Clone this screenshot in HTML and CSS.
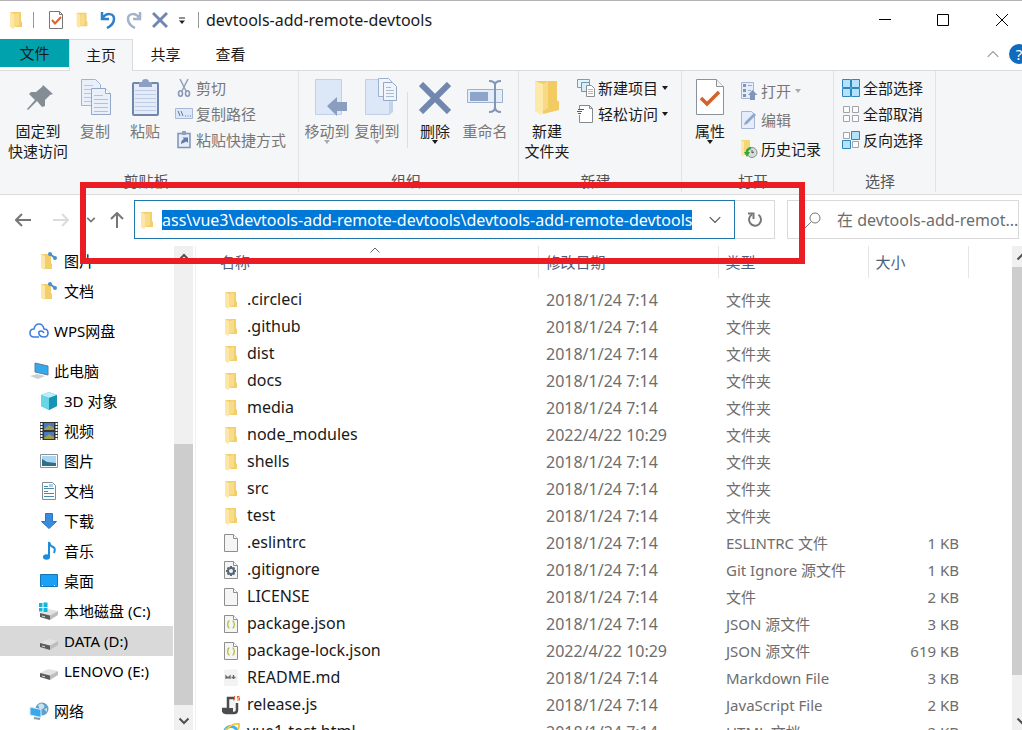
FILE: index.html
```html
<!DOCTYPE html>
<html lang="zh-CN">
<head>
  <meta charset="UTF-8" />
  <meta name="viewport" content="width=device-width, initial-scale=1.0" />
  <title>devtools-add-remote-devtools</title>
  <link rel="stylesheet" href="styles.css">
</head>
<body>
  <!-- shared icons -->
  <svg class="sprite" aria-hidden="true">
    <symbol id="i-folder" viewBox="0 0 16 20">
      <path d="M2 2h11v9l1 1v5H5z" fill="#f3cf6b"/>
      <path d="M2 2l4 2v14l-1 1-3-2z" fill="#fce7a6"/>
      <path d="M6 4l5-1v12l-5 2z" fill="#f9dc8b"/>
    </symbol>
    <symbol id="i-folder-sync" viewBox="0 0 18 20">
      <path d="M1 3h10v9l1 1v5H4z" fill="#f3cf6b"/>
      <path d="M1 3l4 2v14l-4-2z" fill="#fce7a6"/>
      <path d="M10 3l5 4" stroke="#4a90cf" stroke-width="2"/>
      <circle cx="10" cy="3" r="2" fill="#4a8fd0"/><circle cx="15" cy="7" r="2" fill="#4a8fd0"/>
    </symbol>
    <symbol id="i-doc" viewBox="0 0 18 20">
      <path d="M2.500 1.500h9l4 4v13h-13z" fill="#f5f5f5" stroke="#8e8e8e"/>
      <path d="M11.500 1.500v4h4" fill="#fff" stroke="#8e8e8e"/>
    </symbol>
    <symbol id="i-gear" viewBox="0 0 18 20">
      <use href="#i-doc"/>
      <circle cx="9" cy="11" r="3" fill="none" stroke="#596878" stroke-width="2"/>
      <path d="M9 6v2M9 14v2M4 11h2M12 11h2M5.500 7.500l1.400 1.400M11.100 13.100l1.400 1.400M5.500 14.500l1.400-1.400M11.100 8.900l1.400-1.400" stroke="#596878" stroke-width="2"/>
    </symbol>
    <symbol id="i-json" viewBox="0 0 18 20">
      <use href="#i-doc"/>
      <path d="M7.500 7c-1.500 0-1.500 1-1.500 2s0 1.500-1 1.500c1 0 1 .5 1 1.500s0 2 1.500 2M10.500 7c1.500 0 1.500 1 1.500 2s0 1.500 1 1.500c-1 0-1 .5-1 1.500s0 2-1.500 2" fill="none" stroke="#b5bd3c" stroke-width="1.300"/>
    </symbol>
    <symbol id="i-md" viewBox="0 0 18 20">
      <path d="M2 2l12-1 2 2v15H2z" fill="#f3f3f3"/>
      <path d="M4 11V8l2 2 2-2v3M11.500 7v4M9.500 9.500h4" fill="none" stroke="#666" stroke-width="1.300"/>
    </symbol>
    <symbol id="i-js" viewBox="0 0 18 20">
      <path d="M12 3H6v11H1v1q0 3 3 3h8q3 0 3-3V8" fill="#f4f4f4" stroke="#4b4b50" stroke-width="2.500"/>
      <path d="M1 14h9v3H3z" fill="#4b4b50" stroke="#4b4b50" stroke-width="2"/>
      <path d="M12.500 1v3q0 1-1.500 1M17.500 1.500h-2v1.500h2v2h-2.500" fill="none" stroke="#e8603c" stroke-width="1.200"/>
    </symbol>
    <symbol id="i-ie" viewBox="0 0 18 20">
      <circle cx="9" cy="11" r="6.500" fill="none" stroke="#3fb4e5" stroke-width="3"/>
      <path d="M4 11.500h11" stroke="#3fb4e5" stroke-width="2.500"/>
      <path d="M1 17C-1 10 9 1 17 2c1 1 0 3-1 5" fill="none" stroke="#f0c83c" stroke-width="1.800"/>
    </symbol>
    <symbol id="i-caret" viewBox="0 0 8 5"><path d="M1 0h6L4 4z" fill="currentColor"/></symbol>
    <symbol id="i-up" viewBox="0 0 12 8"><path d="M1.500 6.500L6 2l4.500 4.500" fill="none" stroke="currentColor" stroke-width="var(--w, 2)"/></symbol>
    <symbol id="i-down" viewBox="0 0 12 8"><path d="M1.500 1.500L6 6l4.500-4.500" fill="none" stroke="currentColor" stroke-width="var(--w, 2)"/></symbol>
    <symbol id="i-check" viewBox="0 0 28 38">
      <path d="M.5 1.500h20l7 7v28H.5z" fill="#fff" stroke="#8b9299"/>
      <path d="M20.500 1.500v7h7" fill="#f2f4f6" stroke="#8b9299"/>
      <path d="M5 20l6 6L23 14" fill="none" stroke="#d4602c" stroke-width="3.500"/>
    </symbol>
    <symbol id="i-check-small" viewBox="0 0 16 18">
      <path d="M1.500.5h10l3 3v14h-13z" fill="#fff" stroke="#777"/>
      <path d="M11.500.5v3h3" fill="none" stroke="#777"/>
      <path d="M4 9l3 3.500L13 6" fill="none" stroke="#e0602c" stroke-width="2"/>
    </symbol>
    <symbol id="i-cross" viewBox="0 0 32 32"><path d="M2 2l28 28M30 2L2 30" stroke="#7187b0" stroke-width="6"/></symbol>
    <symbol id="i-drive" viewBox="0 0 20 20">
      <path d="M1 12l8-4 10 2-8 5z" fill="#e2e2e2"/>
      <path d="M1 12l10 2.500V19L1 16z" fill="#5a5a5a"/>
      <path d="M11 14.500l8-4.500v4l-8 5z" fill="#bdbdbd"/>
      <path d="M3 15l3 .8" stroke="#ddd"/>
    </symbol>
  </svg>

  <div class="window">
    <header class="titlebar">
      <svg class="i16"><use href="#i-folder"/></svg>
      <span class="bar"></span>
      <svg class="i16 quick"><use href="#i-check-small"/></svg>
      <svg class="i16 quick"><use href="#i-folder"/></svg>
      <svg class="i16 quick" viewBox="0 0 16 18"><path d="M2 1v7h7M2 8C6 1 14 2 14 8c0 4-3 7-7 9" fill="none" stroke="#2f7fcb" stroke-width="2.500"/></svg>
      <svg class="i16 quick" viewBox="0 0 16 18"><path d="M14 1v7H7M14 8C10 1 2 2 2 8c0 4 3 7 7 9" fill="none" stroke="#a5b3c9" stroke-width="2.500"/></svg>
      <svg class="i16 quick"><use href="#i-cross"/></svg>
      <svg class="more" viewBox="0 0 8 8"><path d="M1 1h6" stroke="#222"/><path d="M1 3.500h6L4 7z" fill="#222"/></svg>
      <span class="bar"></span>
      <h1>devtools-add-remote-devtools</h1>
      <div class="controls">
        <button aria-label="最小化"><svg viewBox="0 0 12 12"><path d="M0 5.500h12" stroke="#000"/></svg></button>
        <button aria-label="最大化"><svg viewBox="0 0 12 12"><path d="M.5.5h11v11H.5z" fill="none" stroke="#000"/></svg></button>
        <button aria-label="关闭"><svg viewBox="0 0 12 12"><path d="M0 0l12 12M12 0L0 12" stroke="#000"/></svg></button>
      </div>
    </header>

    <nav class="tabs">
      <button class="tab file">文件</button>
      <button class="tab active">主页</button>
      <button class="tab">共享</button>
      <button class="tab">查看</button>
      <svg class="collapse"><use href="#i-up"/></svg>
      <button class="help" aria-label="帮助">?</button>
    </nav>

    <section class="ribbon">
      <div class="group clipboard">
        <div class="tools">
          <button class="big pin">
            <svg viewBox="0 0 40 40"><path d="M25 7l10 9-3 1-5 5v6l-3 1-5-6-9 9-1-1 8-9-6-6 2-2h5l6-5z" fill="#848d96"/></svg>
            固定到<br>快速访问
          </button>
          <button class="big" disabled>
            <svg viewBox="0 0 40 40">
              <path d="M6.500 1.500h14l5 5v21h-19z" fill="#e9f0fa" stroke="#a3b4d0"/>
              <path d="M9 7.500h9M9 11.500h13M9 15.500h13M9 19.500h13M9 23.500h13" stroke="#b7c6de"/>
              <path d="M16.500 10.500h14l5 5v21h-19z" fill="#e9f0fa" stroke="#94a7c8"/>
              <path d="M30.500 10.500v5h5" fill="#fff" stroke="#94a7c8"/>
              <path d="M19 17.500h9M19 21.500h14M19 25.500h14M19 29.500h14M19 33.500h14" stroke="#b0c1dc"/>
            </svg>
            复制
          </button>
          <button class="big" disabled>
            <svg viewBox="0 0 40 40">
              <rect x="8" y="5" width="25" height="32" rx="1" fill="#e4ecf8" stroke="#7086ad" stroke-width="2"/>
              <path d="M14 4h3q0-3 3.500-3T24 4h3v5H14z" fill="#8da0c4"/>
              <path d="M10 12.500h21M10 16.500h21M10 20.500h21M10 24.500h21M10 28.500h21M10 32.500h21" stroke="#c0cde4"/>
            </svg>
            粘贴
          </button>
          <div class="small-list">
            <button class="small" disabled>
              <svg viewBox="0 0 18 18"><path d="M5 0l6 12M13 0L7 12" stroke="#93a1b8" stroke-width="1.500"/><ellipse cx="5.500" cy="14.500" rx="2" ry="2.700" fill="none" stroke="#8798b7" stroke-width="1.600"/><ellipse cx="12.500" cy="14.500" rx="2" ry="2.700" fill="none" stroke="#8798b7" stroke-width="1.600"/></svg>
              剪切
            </button>
            <button class="small" disabled>
              <svg viewBox="0 0 18 18"><path d="M.5 3.500h17v10H.5z" fill="#dce8f7" stroke="#a7b9d6"/><path d="M3 6l2 5M6 6l2 5M10 11h1M12.500 11h1M15 11h1" stroke="#62779b"/></svg>
              复制路径
            </button>
            <button class="small" disabled>
              <svg viewBox="0 0 18 18"><path d="M3 2.500h12v14H3z" fill="#e4edf9" stroke="#7c92b8" stroke-width="1.500"/><path d="M7 0h4v4H7z" fill="#8ea1c2"/><path d="M6 13q0-4 3-5L7.500 6.500H13V12l-1.500-1.500z" fill="#627aa6"/></svg>
              粘贴快捷方式
            </button>
          </div>
        </div>
        <div class="group-name">剪贴板</div>
      </div>

      <div class="group organize">
        <div class="tools">
          <button class="big" disabled>
            <svg viewBox="0 0 40 40"><path d="M8.500 1.500h26v35h-26z" fill="#dce7f7" stroke="#c0d0ea"/><path d="M20 28l10-9v5h10v9H30v5z" fill="#8b9ebf"/></svg>
            移动到
            <svg class="caret"><use href="#i-caret"/></svg>
          </button>
          <button class="big" disabled>
            <svg viewBox="0 0 40 40"><path d="M8.500 1.500h24v35h-24z" fill="#dce7f7" stroke="#c0d0ea"/><path d="M32 37V26q0-3 4-3v11z" fill="#c4d4ed"/><path d="M21.500.5h10l4 4v14h-14z" fill="#f0f5fc" stroke="#9fb1cf"/><path d="M26.500 4.500h9l4 4v14h-13z" fill="#f0f5fc" stroke="#94a7c8"/><path d="M29 9.500h5M29 12.500h8M29 15.500h8M29 18.500h8" stroke="#a9bad6"/></svg>
            复制到
            <svg class="caret"><use href="#i-caret"/></svg>
          </button>
          <span class="divider"></span>
          <button class="big">
            <svg viewBox="-4 -4 40 40"><use href="#i-cross" width="32" height="32"/></svg>
            删除
            <svg class="caret"><use href="#i-caret"/></svg>
          </button>
          <button class="big" disabled>
            <svg viewBox="0 0 40 40"><path d="M2.500 11.500h35v13h-35z" fill="#e4edf9" stroke="#9db0d0"/><path d="M5 14h18v9H5z" fill="#8fa4c9"/><path d="M24 3q6 0 6 4v22q0 5-6 5M36 3q-6 0-6 4v22q0 5 6 5" fill="none" stroke="#8496b6" stroke-width="2"/></svg>
            重命名
          </button>
        </div>
        <div class="group-name">组织</div>
      </div>

      <div class="group">
        <div class="tools">
          <button class="big">
            <svg viewBox="0 0 40 40"><path d="M8 3h22v19l2 2v8l-16 4z" fill="#f2cb62"/><path d="M8 3l8 3v29l-2 2-6-4z" fill="#fdeaa8"/><path d="M16 6l5-3v27l-5 3z" fill="#f8d985"/></svg>
            新建<br>文件夹
          </button>
          <div class="small-list">
            <button class="small">
              <svg viewBox="0 0 18 18"><path d="M.5.5h12v8H.5z" fill="#e6f4fb" stroke="#65a5c5"/><path d="M4.500 3.500h8v9h-8z" fill="#d7edf7" stroke="#6d98ad"/><path d="M9.500 6.500h5l3 3v8h-8z" fill="#fff" stroke="#8a8f94"/><path d="M11 10.500h5M11 12.500h5M11 14.500h5" stroke="#b4b8bc"/></svg>
              新建项目
              <svg class="caret"><use href="#i-caret"/></svg>
            </button>
            <button class="small">
              <svg viewBox="0 0 18 18"><path d="M2.500 4V.5h10l3 3v14h-13V10" fill="#fff" stroke="#858a90"/><path d="M12.500.5v3h3" fill="none" stroke="#858a90"/><path d="M1 4.500h6M0 6.500h5M1 8.500h3" stroke="#1d6dab"/></svg>
              轻松访问
              <svg class="caret"><use href="#i-caret"/></svg>
            </button>
          </div>
        </div>
        <div class="group-name">新建</div>
      </div>

      <div class="group">
        <div class="tools">
          <button class="big">
            <svg viewBox="-6 0 40 40"><use href="#i-check" width="28" height="38"/></svg>
            属性
            <svg class="caret"><use href="#i-caret"/></svg>
          </button>
          <div class="small-list loose">
            <button class="small" disabled>
              <svg viewBox="0 0 18 18"><path d="M1.500.5h12v16h-12z" fill="#e4edf9" stroke="#a4b6d3"/><path d="M3 2h3v3H3zM3 7h3v3H3zM3 12h3v3H3z" fill="#7e96be"/><path d="M8 3.500h4M8 8.500h3" stroke="#9aaccb"/><path d="M12.500 8l5 5H15v5h-5v-5H8z" fill="#8195bb"/></svg>
              打开
              <svg class="caret"><use href="#i-caret"/></svg>
            </button>
            <button class="small" disabled>
              <svg viewBox="0 0 18 18"><path d="M1.500.5h10l3 3v14h-13z" fill="#e4edf9" stroke="#a4b6d3"/><path d="M4 14l1-3 9-9 2 2-9 9z" fill="#91a5c8"/></svg>
              编辑
            </button>
            <button class="small">
              <svg viewBox="0 0 18 18"><path d="M1 0h9v15H4l-3-2z" fill="#f6d778"/><path d="M1 0l3 2v15l-3-2z" fill="#fdeaa8"/><circle cx="12" cy="12.500" r="5" fill="#d8dcdd" stroke="#868b8c"/><path d="M12 10v3l2-1" fill="none" stroke="#555"/><path d="M11 8q-5 1-4 6" fill="none" stroke="#35a541" stroke-width="2.500"/><path d="M4 12h6l-3 5z" fill="#35a541"/></svg>
              历史记录
            </button>
          </div>
        </div>
        <div class="group-name">打开</div>
      </div>

      <div class="group">
        <div class="tools">
          <div class="small-list">
            <button class="small">
              <svg viewBox="0 0 18 18"><path d="M.5.5h8v8h-8zM9.500.5h8v8h-8zM.5 9.500h8v8h-8zM9.500 9.500h8v8h-8z" fill="#b4e1fb" stroke="#2d87bf"/></svg>
              全部选择
            </button>
            <button class="small">
              <svg viewBox="0 0 18 18"><path d="M1.500 1.500h6v6h-6zM10.500 1.500h6v6h-6zM1.500 10.500h6v6h-6zM10.500 10.500h6v6h-6z" fill="#fbfbfb" stroke="#a0a4a8"/></svg>
              全部取消
            </button>
            <button class="small">
              <svg viewBox="0 0 18 18"><path d="M1.500 1.500h6v6h-6zM10.500 10.500h6v6h-6z" fill="#fbfbfb" stroke="#a0a4a8"/><path d="M9.500.5h8v8h-8zM.5 9.500h8v8h-8z" fill="#b4e1fb" stroke="#2d87bf"/></svg>
              反向选择
            </button>
          </div>
        </div>
        <div class="group-name">选择</div>
      </div>
    </section>

    <div class="navbar">
      <button class="nav-btn" aria-label="后退"><svg viewBox="0 0 16 16"><path d="M16 8H1.500M7 2L1 8l6 6" fill="none" stroke="#767676" stroke-width="2"/></svg></button>
      <button class="nav-btn" aria-label="前进"><svg viewBox="0 0 16 16"><path d="M0 8h14.500M9 2l6 6-6 6" fill="none" stroke="#dcdcdc" stroke-width="2"/></svg></button>
      <button class="nav-btn recent" aria-label="最近浏览的位置"><svg><use href="#i-down"/></svg></button>
      <button class="nav-btn up" aria-label="上移"><svg viewBox="0 0 16 16"><path d="M8 16V1.500M2 7l6-6 6 6" fill="none" stroke="#767676" stroke-width="2"/></svg></button>
      <div class="address">
        <svg class="i16"><use href="#i-folder"/></svg>
        <input type="text" aria-label="地址" value="ass\vue3\devtools-add-remote-devtools\devtools-add-remote-devtools">
        <svg class="drop"><use href="#i-down"/></svg>
      </div>
      <button class="refresh" aria-label="刷新"><svg viewBox="0 0 16 16"><path d="M5 2.500a6 6 0 1 0 6.500.3" fill="none" stroke="#777" stroke-width="2"/><path d="M1 1.500h5.500V7" fill="none" stroke="#777" stroke-width="2"/></svg></button>
      <div class="search">
        <svg viewBox="0 0 16 16"><circle cx="10" cy="6" r="5" fill="none" stroke="#777"/><path d="M6.500 9.500L0 16" stroke="#777"/></svg>
        <input type="text" aria-label="搜索" placeholder="在 devtools-add-remot...">
      </div>
      <div class="highlight"></div>
    </div>

    <main class="content">
      <aside class="sidebar">
        <ul>
          <li><a href="#"><svg><use href="#i-folder-sync"/></svg>图片</a></li>
          <li><a href="#"><svg><use href="#i-folder-sync"/></svg>文档</a></li>
        </ul>
        <ul>
          <li><a href="#" class="root"><svg viewBox="0 0 20 20"><path d="M5 16q-4 0-4-4t4-4q1-5 5-5t5 5q4 0 4 4t-4 4q-4 0-5-3-1-3 2-3 2 0 3 2M5 16h5" fill="none" stroke="#3f7ee0" stroke-width="1.600"/></svg>WPS网盘</a></li>
        </ul>
        <ul>
          <li><a href="#" class="root"><svg viewBox="0 0 20 20"><path d="M6 2l13 3v9L6 11z" fill="#35a8ee" stroke="#607d92"/><path d="M1 15l7-2 8 2-7 3z" fill="#c9cfd4"/></svg>此电脑</a></li>
          <li><a href="#"><svg viewBox="0 0 20 20"><path d="M10 1l8 3v11l-8 4-8-4V4z" fill="#35bcd6"/><path d="M10 1l8 3-8 3-8-3z" fill="#bcecf4"/><path d="M10 7l8-3v11l-8 4z" fill="#1594b3"/><path d="M2 4l8 3v12l-8-4z" fill="#66d5e6"/></svg>3D 对象</a></li>
          <li><a href="#"><svg viewBox="0 0 20 20"><path d="M1 1h18v18H1z" fill="#333"/><path d="M5 2h10v7H5zM5 11h10v7H5z" fill="#4779c4"/><path d="M5 8l5-4 5 3v2H5zM5 17l5-4 5 3v2H5z" fill="#9f9d43"/><path d="M2.500 2v17M17.500 2v17" stroke="#fff" stroke-width="2" stroke-dasharray="2 1"/></svg>视频</a></li>
          <li><a href="#"><svg viewBox="0 0 20 20"><path d="M1.500 3.500h17v13h-17z" fill="#fff" stroke="#8b9298"/><path d="M3 5h14v10H3z" fill="#a9d8f4"/><path d="M3 8l5 3 9 1v3H3z" fill="#2f6f87"/></svg>图片</a></li>
          <li><a href="#"><svg viewBox="0 0 20 20"><path d="M3.500 1.500h10l3 3v14h-13z" fill="#fff" stroke="#858b90"/><path d="M5 5.500h4M5 7.500h10M5 10.500h4M5 12.500h10M5 15.500h10" stroke="#478bad"/><path d="M10 3h4v3h-4z" fill="#9fd2ee"/></svg>文档</a></li>
          <li><a href="#"><svg viewBox="0 0 20 20"><path d="M6.500 2.500h7v8h4l-7.500 7-7.500-7h4z" fill="#3b8bdb" stroke="#2874c5"/></svg>下载</a></li>
          <li><a href="#"><svg viewBox="0 0 20 20"><ellipse cx="7.500" cy="16" rx="3.500" ry="2.800" fill="#1b8ddb"/><path d="M10 16V1q1 4 4 5t1 6" fill="none" stroke="#1b8ddb" stroke-width="2"/></svg>音乐</a></li>
          <li><a href="#"><svg viewBox="0 0 20 20"><path d="M1.500 3.500h17v12h-17z" fill="#1ba0f5" stroke="#1474b4"/><path d="M3 14.500h2M15 14.500h2" stroke="#fff" stroke-dasharray="1 1"/></svg>桌面</a></li>
          <li><a href="#"><svg viewBox="0 0 20 20"><use href="#i-drive"/><path d="M0 2h3.500v4H0zM4.500 1.500h4V6h-4zM0 7h3.500v3.500H0zM4.500 7h4v4h-4z" fill="#15b4dc"/></svg>本地磁盘 (C:)</a></li>
          <li><a href="#" class="selected"><svg><use href="#i-drive"/></svg>DATA (D:)</a></li>
          <li><a href="#"><svg><use href="#i-drive"/></svg>LENOVO (E:)</a></li>
        </ul>
        <ul>
          <li><a href="#" class="root"><svg viewBox="0 0 20 20"><circle cx="13" cy="8" r="6.500" fill="#629fc9"/><path d="M9 4q4-3 6 0t-4 5zM15 8l3-1v4z" fill="#c8e2ee"/><path d="M1 6l11 2.500v8L1 14z" fill="#38a9ef" stroke="#dcecf5"/><path d="M5 17l6 1" stroke="#7f99aa" stroke-width="2"/></svg>网络</a></li>
        </ul>
      </aside>
      <div class="scroll side-scroll">
        <svg><use href="#i-up"/></svg>
        <span class="thumb"></span>
        <svg><use href="#i-down"/></svg>
      </div>

      <div class="files">
        <table>
          <colgroup>
            <col class="c-name"><col class="c-date"><col class="c-type"><col class="c-size">
          </colgroup>
          <thead>
            <tr>
              <th>名称<svg class="sort"><use href="#i-up"/></svg></th>
              <th>修改日期</th>
              <th>类型</th>
              <th>大小</th>
            </tr>
          </thead>
          <tbody>
            <tr><td><svg><use href="#i-folder"/></svg>.circleci</td><td>2018/1/24 7:14</td><td>文件夹</td><td></td></tr>
            <tr><td><svg><use href="#i-folder"/></svg>.github</td><td>2018/1/24 7:14</td><td>文件夹</td><td></td></tr>
            <tr><td><svg><use href="#i-folder"/></svg>dist</td><td>2018/1/24 7:14</td><td>文件夹</td><td></td></tr>
            <tr><td><svg><use href="#i-folder"/></svg>docs</td><td>2018/1/24 7:14</td><td>文件夹</td><td></td></tr>
            <tr><td><svg><use href="#i-folder"/></svg>media</td><td>2018/1/24 7:14</td><td>文件夹</td><td></td></tr>
            <tr><td><svg><use href="#i-folder"/></svg>node_modules</td><td>2022/4/22 10:29</td><td>文件夹</td><td></td></tr>
            <tr><td><svg><use href="#i-folder"/></svg>shells</td><td>2018/1/24 7:14</td><td>文件夹</td><td></td></tr>
            <tr><td><svg><use href="#i-folder"/></svg>src</td><td>2018/1/24 7:14</td><td>文件夹</td><td></td></tr>
            <tr><td><svg><use href="#i-folder"/></svg>test</td><td>2018/1/24 7:14</td><td>文件夹</td><td></td></tr>
            <tr><td><svg><use href="#i-doc"/></svg>.eslintrc</td><td>2018/1/24 7:14</td><td>ESLINTRC 文件</td><td>1 KB</td></tr>
            <tr><td><svg><use href="#i-gear"/></svg>.gitignore</td><td>2018/1/24 7:14</td><td>Git Ignore 源文件</td><td>1 KB</td></tr>
            <tr><td><svg><use href="#i-doc"/></svg>LICENSE</td><td>2018/1/24 7:14</td><td>文件</td><td>2 KB</td></tr>
            <tr><td><svg><use href="#i-json"/></svg>package.json</td><td>2018/1/24 7:14</td><td>JSON 源文件</td><td>3 KB</td></tr>
            <tr><td><svg><use href="#i-json"/></svg>package-lock.json</td><td>2022/4/22 10:29</td><td>JSON 源文件</td><td>619 KB</td></tr>
            <tr><td><svg><use href="#i-md"/></svg>README.md</td><td>2018/1/24 7:14</td><td>Markdown File</td><td>3 KB</td></tr>
            <tr><td><svg><use href="#i-js"/></svg>release.js</td><td>2018/1/24 7:14</td><td>JavaScript File</td><td>2 KB</td></tr>
            <tr><td><svg><use href="#i-ie"/></svg>vue1-test.html</td><td>2018/1/24 7:14</td><td>HTML 文档</td><td>2 KB</td></tr>
          </tbody>
        </table>
      </div>
      <div class="scroll file-scroll">
        <svg><use href="#i-up"/></svg>
        <span class="thumb"></span>
        <svg><use href="#i-down"/></svg>
      </div>
    </main>
  </div>
</body>
</html>
```
FILE: styles.css
```css
* {
  box-sizing: border-box;
}
body {
  margin: 0;
  font-family: "Noto Sans", "Noto Sans CJK SC", sans-serif;
  font-size: 15px;
  line-height: 20px;
  color: #1a1a1a;
  background: #fff;
}
button, input {
  font: inherit;
  color: inherit;
  border: none;
  background: none;
  padding: 0;
}
svg {
  flex: none;
}
.sprite {
  position: absolute;
  width: 0;
  height: 0;
}
.window {
  height: 100vh;
  display: flex;
  flex-direction: column;
  overflow: hidden;
  border-top: 1px solid #b5b3b8;
}

/* title bar */
.titlebar {
  height: 38px;
  flex: none;
  display: flex;
  align-items: center;
  padding-left: 8px;
}
.i16 {
  width: 16px;
  height: 20px;
}
.quick {
  height: 18px;
  margin-right: 10px;
}
.bar {
  width: 1px;
  height: 16px;
  margin: 0 14px 0 9px;
  background: #999;
}
.more {
  width: 8px;
  height: 8px;
  margin-top: 2px;
}
.more + .bar {
  margin: 0 7px 0 12px;
}
.titlebar h1 {
  margin: 0;
  font-size: 16px;
  font-weight: normal;
}
.controls {
  display: flex;
  margin-left: auto;
}
.controls button {
  width: 58px;
  height: 38px;
}
.controls button:last-child {
  width: 50px;
  padding-left: 10px;
}
.controls svg {
  width: 12px;
  height: 12px;
  display: block;
  margin: 0 auto;
}

/* tabs */
.tabs {
  height: 31px;
  flex: none;
  display: flex;
  align-items: flex-start;
}
.tab {
  width: 65px;
  height: 31px;
  padding-bottom: 2px;
}
.tab.file {
  width: 69px;
  height: 28px;
  padding: 0;
  background: #00a2ae;
}
.tab.active {
  width: 64px;
  height: 32px;
  background: #f5f6f7;
  border: 1px solid #dadbdc;
  border-bottom: none;
  z-index: 1;
}
.collapse {
  width: 14px;
  height: 10px;
  margin: 10px 9px 0 auto;
  color: #999;
  --w: 1;
}
.help {
  width: 20px;
  height: 20px;
  margin: 5px -7px 0 0;
  border-radius: 50%;
  background: #0f6cbd;
  color: #fff;
}

/* ribbon */
.ribbon {
  height: 125px;
  flex: none;
  display: flex;
  background: #f5f6f7;
  border-top: 1px solid #dadbdc;
  border-bottom: 1px solid #dadbdc;
}
.group {
  display: flex;
  flex-direction: column;
  justify-content: space-between;
  margin-bottom: 2px;
  padding: 7px 12px 1px 3px;
  border-right: 1px solid #e2e3e4;
}
.group.clipboard {
  padding-left: 6px;
}
.group.organize {
  padding-right: 8px;
}
.tools {
  display: flex;
}
.group-name {
  text-align: center;
  color: #555;
}
.big {
  width: 50px;
  display: block;
  align-self: flex-start;
  white-space: nowrap;
}
.big.pin {
  width: 64px;
}
.big svg {
  width: 40px;
  height: 40px;
  display: block;
  margin: 0 auto 3px;
}
.big .caret {
  width: 8px;
  height: 5px;
  margin: -1px auto 0;
}
.divider {
  width: 1px;
  height: 56px;
  margin: 14px 2px 0 5px;
  background: #dcdddf;
}
.small-list {
  display: flex;
  flex-direction: column;
  gap: 6px;
  margin-left: 5px;
}
.small-list.loose {
  gap: 9px;
  padding-top: 3px;
}
.small {
  display: flex;
  align-items: center;
  gap: 3px;
  white-space: nowrap;
}
.small svg {
  width: 18px;
  height: 18px;
}
.small .caret {
  width: 8px;
  height: 5px;
}
button:disabled {
  color: #777;
}
button:disabled .caret {
  color: #aaa;
}

/* address row */
.navbar {
  position: relative;
  height: 51px;
  flex: none;
  display: flex;
  align-items: center;
  padding: 0 3px 2px 4px;
}
.nav-btn {
  width: 38px;
}
.nav-btn svg {
  width: 16px;
  height: 16px;
  display: block;
  margin: 0 auto;
}
.nav-btn.recent {
  width: 22px;
  color: #767676;
}
.nav-btn.recent svg {
  width: 10px;
  height: 8px;
}
.nav-btn.up {
  width: 30px;
}
.address {
  flex: 1;
  height: 39px;
  display: flex;
  align-items: center;
  margin-left: 2px;
  padding: 0 12px 0 4px;
  border: 1px solid #1f77ab;
}
.address input {
  width: 530px;
  height: 20px;
  margin-left: 7px;
  background: #0078d7;
  color: #fff;
  font-size: 16px;
}
.address .drop {
  width: 14px;
  height: 10px;
  margin-left: auto;
  color: #555;
  --w: 1;
}
.refresh {
  width: 40px;
  height: 39px;
  border: 1px solid #d9d9d9;
  border-left: none;
}
.refresh svg {
  width: 16px;
  height: 16px;
  display: block;
  margin: 0 auto;
}
.search {
  width: 232px;
  height: 39px;
  display: flex;
  align-items: center;
  margin-left: 12px;
  padding-left: 17px;
  border: 1px solid #d9d9d9;
}
.search svg {
  width: 16px;
  height: 16px;
}
.search input {
  flex: 1;
  min-width: 0;
  margin-left: 16px;
  font-size: 16px;
}
.search input::placeholder {
  color: #6d6d6d;
  opacity: 1;
}
.highlight {
  position: absolute;
  left: 80px;
  top: -13px;
  width: 725px;
  height: 82px;
  border: 6px solid #ea1c24;
  z-index: 2;
}

/* body */
.content {
  flex: 1;
  min-height: 0;
  display: flex;
}
.sidebar {
  width: 174px;
  flex: none;
  overflow: hidden;
}
.sidebar ul {
  list-style: none;
  margin: 0 0 10px;
  padding: 0;
}
.sidebar a {
  height: 30px;
  display: flex;
  align-items: center;
  gap: 5px;
  padding-left: 39px;
  margin-right: 1px;
  color: #000;
  text-decoration: none;
  white-space: nowrap;
}
.sidebar a.root {
  padding-left: 29px;
}
.sidebar a.selected {
  background: #d9d9d9;
}
.sidebar svg {
  width: 20px;
  height: 20px;
}
.scroll {
  flex: none;
  display: flex;
  flex-direction: column;
  padding: 6px 0 4px;
  background: #f0f0f0;
  color: #505050;
  overflow: hidden;
}
.scroll svg {
  width: 12px;
  height: 10px;
  margin-left: 4px;
}
.scroll .thumb {
  width: 100%;
  background: #cdcdcd;
}
.side-scroll {
  width: 19px;
}
.side-scroll .thumb {
  height: 55%;
  margin: auto 0 11px;
}
.file-scroll {
  width: 10px;
}
.file-scroll .thumb {
  height: 86%;
  margin: 5px 0 auto;
}

/* file list */
.files {
  flex: 1;
  min-width: 0;
  margin-left: 2px;
  border-left: 1px solid #f0f0f0;
  overflow: hidden;
}
.files table {
  table-layout: fixed;
  width: 772px;
  border-collapse: collapse;
}
.c-name {
  width: 342px;
}
.c-date {
  width: 180px;
}
.c-type {
  width: 150px;
}
.c-size {
  width: 100px;
}
.files th {
  position: relative;
  height: 32px;
  padding: 0 7px;
  text-align: left;
  font-weight: normal;
  color: #4c607a;
  border-right: 1px solid #e5e5e5;
}
.files th:first-child {
  padding-left: 24px;
}
.sort {
  position: absolute;
  left: 50%;
  top: 0;
  width: 12px;
  height: 8px;
  margin-left: 2px;
  color: #666;
  --w: 1;
}
.files tbody::before {
  content: "";
  display: block;
  height: 8px;
}
.files td {
  height: 27px;
  padding: 0 8px;
  color: #6d6d6d;
  white-space: nowrap;
}
.files td:first-child {
  padding-left: 26px;
  color: #1a1a1a;
  font-size: 16px;
}
.files td:nth-child(2) {
  font-size: 16px;
}
.files td:last-child {
  padding-right: 9px;
  text-align: right;
}
.files td svg {
  width: 18px;
  height: 20px;
  margin-right: 7px;
  vertical-align: middle;
}
```
